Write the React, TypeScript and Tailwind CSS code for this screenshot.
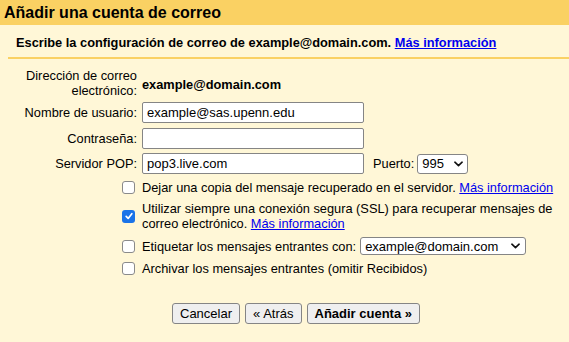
import React from "react";

function Box({ checked }: { checked?: boolean }) {
  return checked ? (
    <span className="flex h-[13px] w-[13px] items-center justify-center rounded-[3px] bg-[#1a73e8]">
      <svg viewBox="0 0 12 12" className="h-[10px] w-[10px]">
        <path d="M2.6 6.4 L5 8.9 L9.4 3.2" fill="none" stroke="white" strokeWidth="2" strokeLinecap="round" strokeLinejoin="round" />
      </svg>
    </span>
  ) : (
    <span className="block h-[13px] w-[13px] rounded-[3px] border border-[#8a8a8a] bg-white" />
  );
}

function Chevron() {
  return (
    <svg viewBox="0 0 10 6" className="h-[6px] w-[9px]">
      <path d="M1 1 L5 4.8 L9 1" fill="none" stroke="#111" strokeWidth="1.8" strokeLinecap="round" strokeLinejoin="round" />
    </svg>
  );
}

function Link({ children }: { children: React.ReactNode }) {
  return <a href="#" className="text-[#0000ee] underline">{children}</a>;
}

function Label({ children }: { children: React.ReactNode }) {
  return <div className="w-[129px] shrink-0 text-right">{children}</div>;
}

function TextBox({ value }: { value?: string }) {
  return (
    <div className="flex h-[21px] w-[222px] items-center rounded-[2px] border border-[#858585] bg-white pl-[4px] text-[13px]">
      {value}
    </div>
  );
}

function CheckRow({ checked, children }: { checked?: boolean; children: React.ReactNode }) {
  return (
    <div className="flex items-center py-[3px]">
      <div className="flex w-[129px] shrink-0 justify-end pr-[2px]">
        <Box checked={checked} />
      </div>
      <div className="ml-[5px]">{children}</div>
    </div>
  );
}

function Button({ children, bold }: { children: React.ReactNode; bold?: boolean }) {
  return (
    <button className={`flex h-[21px] items-center rounded-[3px] border border-[#858585] bg-[#efefef] px-[7px] text-[13px] ${bold ? "font-bold" : ""}`}>
      {children}
    </button>
  );
}

export default function App() {
  return (
    <div className="h-[342px] w-[569px] overflow-hidden bg-[#fff7d7] font-['Liberation_Sans',Arial,sans-serif] text-[12.8px] leading-[15px] text-black">
      <div className="flex h-[25px] items-center bg-[#fad163] pl-[4px] text-[16px] font-bold">
        Añadir una cuenta de correo
      </div>
      <div className="pl-[8px]">
        <div className="border-b-2 border-[#fad163] pb-[7px] pl-[8px] pt-[10px] font-bold">
          Escribe la configuración de correo de example@domain.com. <Link>Más información</Link>
        </div>

        <div className="mt-[9px] flex flex-col">
          <div className="flex h-[30px] items-center">
            <Label>
              Dirección de correo
              <br />
              electrónico:
            </Label>
            <div className="ml-[5px] mt-[3px] font-bold">example@domain.com</div>
          </div>
          <div className="mt-[4px] flex items-center">
            <Label>Nombre de usuario:</Label>
            <div className="ml-[5px]">
              <TextBox value="example@sas.upenn.edu" />
            </div>
          </div>
          <div className="mt-[5px] flex items-center">
            <Label>Contraseña:</Label>
            <div className="ml-[5px]">
              <TextBox />
            </div>
          </div>
          <div className="mt-[4px] flex items-center">
            <Label>Servidor POP:</Label>
            <div className="ml-[5px] flex items-center">
              <TextBox value="pop3.live.com" />
              <span className="ml-[9px]">Puerto:</span>
              <div className="ml-[3px] flex h-[20px] w-[51px] items-center justify-between rounded-[3px] border border-[#858585] bg-white pl-[4px] pr-[4px] text-[13px]">
                <span>995</span>
                <Chevron />
              </div>
            </div>
          </div>

          <div className="mt-[3px] flex flex-col">
            <CheckRow>
              Dejar una copia del mensaje recuperado en el servidor. <Link>Más información</Link>
            </CheckRow>
            <CheckRow checked>
              Utilizar siempre una conexión segura (SSL) para recuperar mensajes de
              <br />
              correo electrónico. <Link>Más información</Link>
            </CheckRow>
            <CheckRow>
              <div className="flex items-center">
                <span>Etiquetar los mensajes entrantes con:</span>
                <div className="ml-[4px] flex h-[18px] w-[166px] items-center justify-between rounded-[3px] border border-[#858585] bg-white pl-[4px] pr-[5px] text-[13px]">
                  <span>example@domain.com</span>
                  <Chevron />
                </div>
              </div>
            </CheckRow>
            <CheckRow>Archivar los mensajes entrantes (omitir Recibidos)</CheckRow>
          </div>

          <div className="ml-[164px] mt-[24px] flex gap-[5px]">
            <Button>Cancelar</Button>
            <Button>« Atrás</Button>
            <Button bold>Añadir cuenta »</Button>
          </div>
        </div>
      </div>
    </div>
  );
}
